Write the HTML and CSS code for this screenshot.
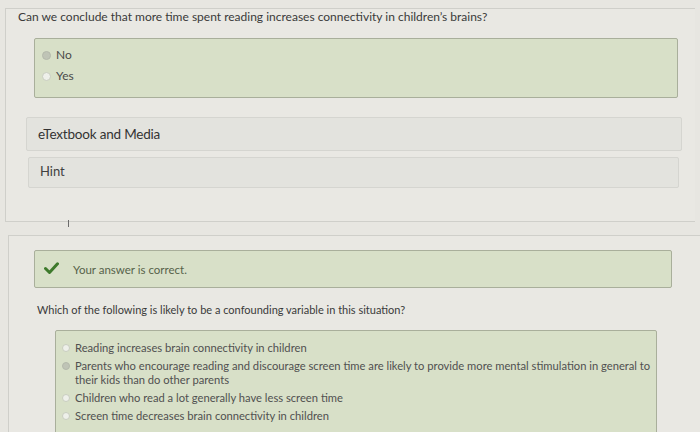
FILE: index.html
```html
<!DOCTYPE html>
<html>
<head>
<meta charset="utf-8">
<link rel="stylesheet" href="styles.css">
</head>
<body>
<section class="panel panel-one">
  <p class="question">Can we conclude that more time spent reading increases connectivity in children’s brains?</p>
  <div class="answer-box choices-one">
    <label class="choice"><span class="radio radio-selected"></span><span>No</span></label>
    <label class="choice"><span class="radio"></span><span>Yes</span></label>
  </div>
  <div class="grey-box etext">eTextbook and Media</div>
  <div class="grey-box hint">Hint</div>
</section>
<div class="gap"><span class="tick"></span></div>
<section class="panel panel-two">
  <div class="answer-box correct">
    <svg class="check" width="15" height="12" viewBox="0 0 15 12"><path d="M1.5 6.5 L5.5 10.5 L13.5 1.8" fill="none" stroke="#3e7a2c" stroke-width="3" stroke-linecap="round" stroke-linejoin="round"/></svg>
    <span>Your answer is correct.</span>
  </div>
  <p class="question-two">Which of the following is likely to be a confounding variable in this situation?</p>
  <div class="answer-box choices-two">
    <label class="choice2"><span class="radio small"></span><span>Reading increases brain connectivity in children</span></label>
    <label class="choice2"><span class="radio small radio-selected"></span><span class="wrap">Parents who encourage reading and discourage screen time are likely to provide more mental stimulation in general to their kids than do other parents</span></label>
    <label class="choice2"><span class="radio small"></span><span>Children who read a lot generally have less screen time</span></label>
    <label class="choice2"><span class="radio small"></span><span>Screen time decreases brain connectivity in children</span></label>
  </div>
</section>
</body>
</html>
```

FILE: styles.css
```css
* { box-sizing: border-box; }
html, body {
  margin: 0;
  padding: 0;
  background: #e7e6e1;
  font-family: Lato, "Open Sans", sans-serif;
  overflow: hidden;
}
body { width: 700px; height: 432px; }
p { margin: 0; }

.panel {
  border-top: 1px solid #cfcfca;
  border-left: 1px solid #cfcfca;
  background: #e9e8e3;
}
.panel-one {
  margin: 8px 5px 0 5px;
  height: 214px;
  border-bottom: 1px solid #cfcfca;
  padding-top: 1px;
}
.question {
  font-size: 12px;
  line-height: 14px;
  color: #3a3a3a;
  padding-left: 12px;
}
.answer-box {
  background: #d8e0c8;
  border: 1px solid #a9af9b;
  border-radius: 2px;
}
.choices-one {
  margin: 14px 0 0 28px;
  width: 644px;
  height: 60px;
  padding: 9px 0 0 7px;
  display: flex;
  flex-direction: column;
  gap: 7px;
}
.choice {
  display: flex;
  align-items: center;
  gap: 5px;
  font-size: 12px;
  line-height: 14px;
  color: #4a4a4a;
}
.radio {
  width: 9px;
  height: 9px;
  border-radius: 50%;
  background: #eef0ea;
  border: 1px solid #c9cdc0;
  flex: none;
}
.radio-selected {
  background: #bfc4b6;
  border-color: #b4b9ab;
}
.grey-box {
  background: #e3e3de;
  border: 1px solid #d5d5d0;
  border-radius: 2px;
  color: #333;
  display: flex;
  align-items: center;
}
.etext {
  margin: 19px 13px 0 20px;
  height: 34px;
  font-size: 13.5px;
  padding-left: 11px;
  letter-spacing: -0.2px;
}
.hint {
  margin: 6px 16px 0 22px;
  height: 31px;
  font-size: 13px;
  padding: 0 0 4px 11px;
  color: #404040;
}
.gap {
  height: 13px;
  position: relative;
}
.tick {
  position: absolute;
  left: 68px;
  top: -2px;
  width: 1px;
  height: 7px;
  background: #6b6b6b;
}
.panel-two {
  margin-left: 8px;
  height: 200px;
  padding-top: 14px;
}
.correct {
  margin-left: 25px;
  width: 638px;
  height: 38px;
  display: flex;
  align-items: center;
  padding-left: 9px;
  gap: 14px;
  font-size: 11.5px;
  color: #56624a;
}
.check { flex: none; margin-top: -2px; }
.question-two {
  margin: 15px 0 0 28px;
  font-size: 11px;
  line-height: 14px;
  color: #3a3a3a;
}
.choices-two {
  margin: 13px 0 0 46px;
  width: 602px;
  height: 120px;
  padding: 10px 0 0 6px;
  display: flex;
  flex-direction: column;
  gap: 4px;
}
.choice2 {
  display: flex;
  align-items: flex-start;
  gap: 5px;
  font-size: 11.2px;
  line-height: 14px;
  color: #505050;
}
.radio.small {
  width: 8px;
  height: 8px;
  margin-top: 3px;
}
.wrap { width: 582px; }
```
